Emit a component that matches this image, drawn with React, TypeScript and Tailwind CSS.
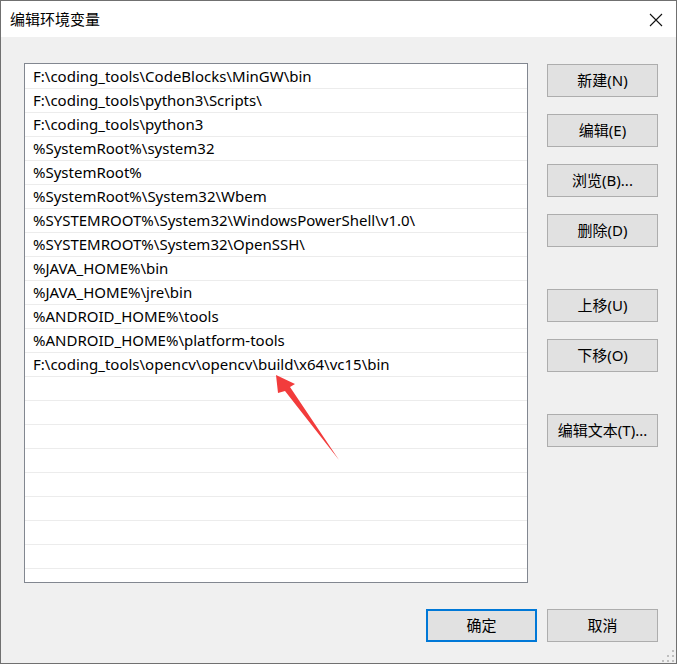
import React from "react";

const items = [
  "F:\\coding_tools\\CodeBlocks\\MinGW\\bin",
  "F:\\coding_tools\\python3\\Scripts\\",
  "F:\\coding_tools\\python3",
  "%SystemRoot%\\system32",
  "%SystemRoot%",
  "%SystemRoot%\\System32\\Wbem",
  "%SYSTEMROOT%\\System32\\WindowsPowerShell\\v1.0\\",
  "%SYSTEMROOT%\\System32\\OpenSSH\\",
  "%JAVA_HOME%\\bin",
  "%JAVA_HOME%\\jre\\bin",
  "%ANDROID_HOME%\\tools",
  "%ANDROID_HOME%\\platform-tools",
  "F:\\coding_tools\\opencv\\opencv\\build\\x64\\vc15\\bin",
];

const font = {
  fontFamily: '"Noto Sans", "Noto Sans CJK SC", sans-serif',
};

function Btn({ label, primary }: { label: string; primary?: boolean }) {
  return (
    <div
      className={
        "w-[111px] h-[33px] flex items-center justify-center bg-[#e1e1e1] text-[15px] text-black leading-none " +
        (primary ? "border-2 border-[#0078d7]" : "border border-[#adadad]")
      }
    >
      {label}
    </div>
  );
}

export default function App() {
  const rows = Array.from({ length: 22 }, (_, i) => items[i] ?? "");
  return (
    <div
      className="relative w-[677px] h-[664px] border border-[#707070] flex flex-col bg-[#f0f0f0] overflow-hidden"
      style={font}
    >
      <div className="h-[36px] bg-white flex items-center justify-between shrink-0">
        <span className="ml-[9px] text-[15px] text-black" style={{ fontFamily: '"Noto Sans CJK SC", sans-serif' }}>
          编辑环境变量
        </span>
        <svg width="14" height="14" viewBox="0 0 14 14" className="mr-[13px] mt-[1px]">
          <path d="M1 1 L13 13 M13 1 L1 13" stroke="#111" strokeWidth="1.1" fill="none" />
        </svg>
      </div>
      <div className="flex-1 flex flex-col pl-[23px] pr-[18px] pt-[26px]">
        <div className="flex">
          <div className="w-[504px] h-[520px] border border-[#828790] bg-white pt-[1px] overflow-hidden">
            {rows.map((t, i) => (
              <div
                key={i}
                className="h-[24px] border-b border-[#ececec] pl-[8px] text-[15px] leading-[22px] text-black whitespace-nowrap"
              >
                {t}
              </div>
            ))}
          </div>
          <div className="ml-[19px] pt-[1px] flex flex-col">
            <Btn label="新建(N)" />
            <div className="h-[17px]" />
            <Btn label="编辑(E)" />
            <div className="h-[17px]" />
            <Btn label="浏览(B)..." />
            <div className="h-[17px]" />
            <Btn label="删除(D)" />
            <div className="h-[42px]" />
            <Btn label="上移(U)" />
            <div className="h-[17px]" />
            <Btn label="下移(O)" />
            <div className="h-[42px]" />
            <Btn label="编辑文本(T)..." />
          </div>
        </div>
        <div className="flex justify-end gap-[10px] mt-[26px]">
          <Btn label="确定" primary />
          <Btn label="取消" />
        </div>
      </div>
      <svg className="absolute left-0 top-0 pointer-events-none" width="677" height="664">
        <polygon
          points="275,374 294,383 289,386 338,459 284,390 277,392"
          fill="#f23c3c"
        />
      </svg>
      <div className="absolute right-[2px] bottom-[1px] w-[12px] h-[12px]">
        <div className="absolute left-[10px] top-0 w-[2px] h-[2px] bg-[#bfbfbf]" />
        <div className="absolute left-[5px] top-[5px] w-[2px] h-[2px] bg-[#bfbfbf]" />
        <div className="absolute left-[10px] top-[5px] w-[2px] h-[2px] bg-[#bfbfbf]" />
        <div className="absolute left-0 top-[10px] w-[2px] h-[2px] bg-[#bfbfbf]" />
        <div className="absolute left-[5px] top-[10px] w-[2px] h-[2px] bg-[#bfbfbf]" />
        <div className="absolute left-[10px] top-[10px] w-[2px] h-[2px] bg-[#bfbfbf]" />
      </div>
    </div>
  );
}
